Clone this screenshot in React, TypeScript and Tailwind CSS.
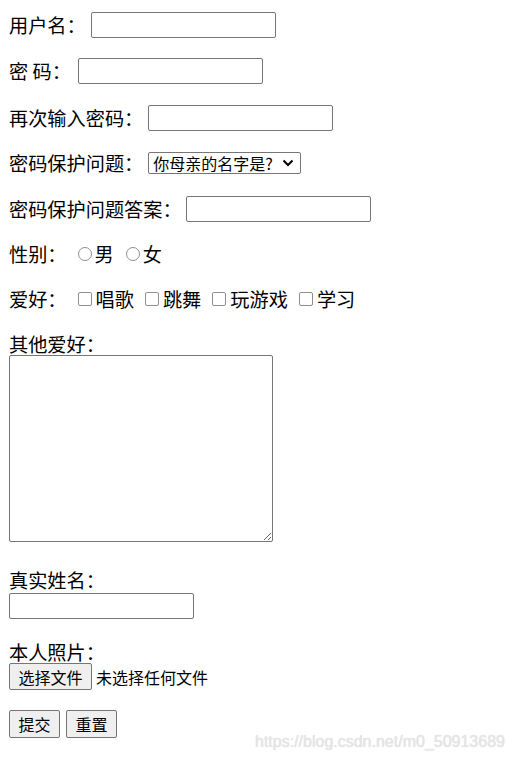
import React from "react";

const font = { fontFamily: '"Microsoft YaHei", "Noto Sans CJK SC", sans-serif' };

function TextBox({ className = "" }: { className?: string }) {
  return (
    <input
      type="text"
      className={`w-[185px] h-[26px] border border-[#767676] rounded-[2px] bg-white px-1 outline-none ${className}`}
    />
  );
}

function Radio({ label }: { label: string }) {
  return (
    <label className="flex items-center">
      <span className="shrink-0 w-[14px] h-[14px] rounded-full border border-[#8f8f8f] bg-white ml-[5px] mr-[3px]" />
      <span>{label}</span>
    </label>
  );
}

function Check({ label }: { label: string }) {
  return (
    <label className="flex items-center">
      <span className="shrink-0 w-[14px] h-[14px] rounded-[2px] border border-[#8f8f8f] bg-white ml-[3px] mr-[4px]" />
      <span>{label}</span>
    </label>
  );
}

function Row({ label, children, className = "" }: { label: string; children: React.ReactNode; className?: string }) {
  return (
    <div className={`flex items-center h-[26px] ${className}`}>
      <span className="whitespace-pre mr-[5px]">{label}</span>
      {children}
    </div>
  );
}

export default function App() {
  return (
    <div
      className="relative w-[512px] h-[760px] bg-white text-black text-[19.2px] leading-[22px] px-[9px] pt-[12px] overflow-hidden"
      style={font}
    >
      <Row label="用户名：">
        <TextBox />
      </Row>
      <Row label="密 码：" className="mt-[20px]">
        <TextBox className="ml-[2px]" />
      </Row>
      <Row label="再次输入密码：" className="mt-[21px]">
        <TextBox />
      </Row>
      <Row label="密码保护问题：" className="mt-[19px]">
        <div className="flex items-center justify-between w-[153px] h-[22px] border border-[#767676] rounded-[2px] pl-[4px] pr-[6px] text-[16px] leading-[20px]">
          <span>你母亲的名字是?</span>
          <svg width="12" height="8" viewBox="0 0 12 8" fill="none">
            <path d="M1.5 1.5 L6 6 L10.5 1.5" stroke="#000" strokeWidth="2" />
          </svg>
        </div>
      </Row>
      <Row label="密码保护问题答案：" className="mt-[20px]">
        <TextBox className="-ml-[1px]" />
      </Row>
      <div className="flex items-center h-[26px] mt-[19px]">
        <span className="mr-[6px]">性别：</span>
        <Radio label="男" />
        <span className="w-[7px]" />
        <Radio label="女" />
      </div>
      <div className="flex items-center h-[26px] mt-[19px] gap-[8px]">
        <span className="mr-[0px]">爱好：</span>
        <Check label="唱歌" />
        <Check label="跳舞" />
        <Check label="玩游戏" />
        <Check label="学习" />
      </div>
      <div className="mt-[21px] h-[22px]">其他爱好：</div>
      <textarea className="block w-[264px] h-[187px] border border-[#767676] rounded-[2px] resize outline-none" />
      <div className="mt-[27px] h-[22px]">真实姓名：</div>
      <TextBox className="block mt-[2px]" />
      <div className="mt-[22px] h-[22px]">本人照片：</div>
      <div className="flex items-center text-[16px] leading-[20px]">
        <button className="w-[83px] h-[27px] bg-[#efefef] border border-[#767676] rounded-[2px]">选择文件</button>
        <span className="ml-[4px]">未选择任何文件</span>
      </div>
      <div className="flex gap-[6px] mt-[20px] text-[16px] leading-[20px]">
        <button className="w-[51px] h-[28px] bg-[#efefef] border border-[#767676] rounded-[2px]">提交</button>
        <button className="w-[51px] h-[28px] bg-[#efefef] border border-[#767676] rounded-[2px]">重置</button>
      </div>
      <div
        className="absolute left-[255px] top-[732px] text-[16px] leading-[20px] text-[#e6e6e6] whitespace-nowrap"
        style={{ fontFamily: '"Liberation Sans", Arial, sans-serif', textShadow: "0 0 1px #d6d6d6" }}
      >
        https://blog.csdn.net/m0_50913689
      </div>
    </div>
  );
}
